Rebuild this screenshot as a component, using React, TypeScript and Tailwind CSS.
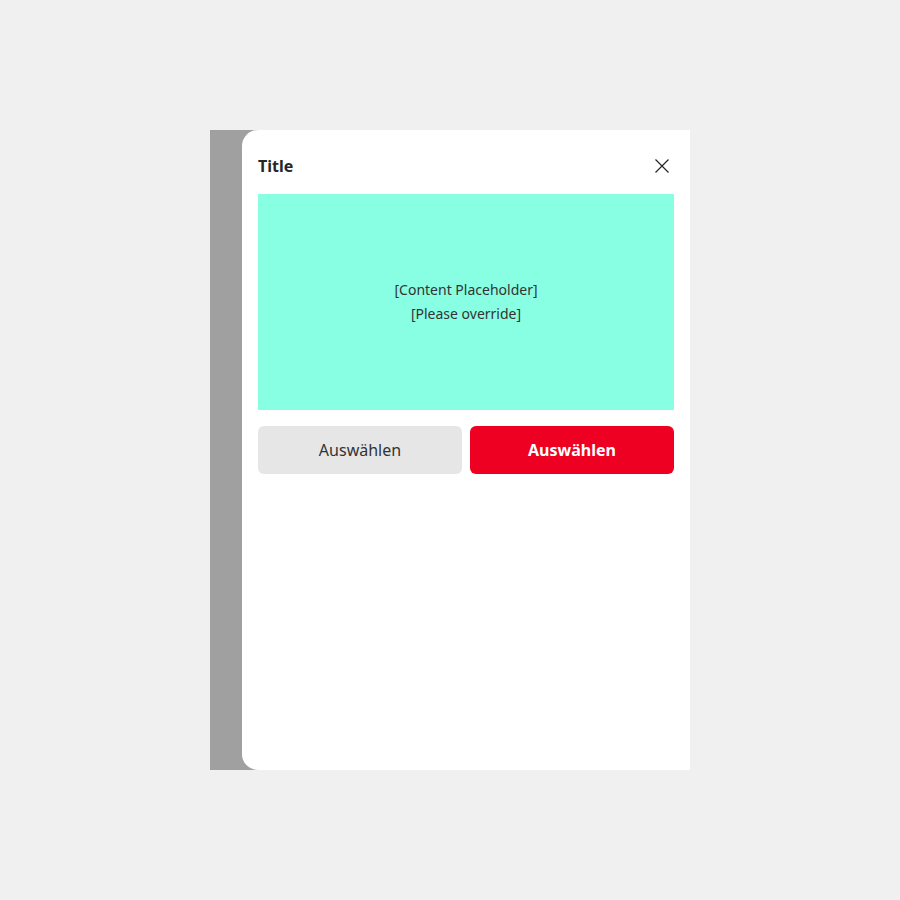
export default function App() {
  return (
    <div className="min-h-[900px] w-full bg-[#f0f0f0] flex items-center justify-center font-['Noto_Sans',sans-serif]">
      <div className="flex h-[640px] w-[480px] bg-[#a0a0a0]">
        <div className="ml-8 flex-1 bg-white rounded-l-2xl px-4 pt-4">
          <div className="h-10 flex items-center justify-between">
            <h2 className="text-base font-bold text-[#262626]">Title</h2>
            <button className="w-8 h-8 -mr-1 flex items-center justify-center text-[#262626]">
              <svg width="16" height="16" viewBox="0 0 16 16" fill="none" stroke="currentColor" strokeWidth="1.2">
                <path d="M1.5 1.5 14.5 14.5M14.5 1.5 1.5 14.5" />
              </svg>
            </button>
          </div>
          <div className="mt-2 h-[216px] bg-[#88ffe3] flex flex-col items-center justify-center text-sm leading-6 text-[#333]">
            <span>[Content Placeholder]</span>
            <span>[Please override]</span>
          </div>
          <div className="mt-4 grid grid-cols-2 gap-2">
            <button className="h-12 rounded-md bg-[#e6e6e6] text-base text-[#333]">Auswählen</button>
            <button className="h-12 rounded-md bg-[#ee0022] text-base font-bold text-white">Auswählen</button>
          </div>
        </div>
      </div>
    </div>
  );
}
